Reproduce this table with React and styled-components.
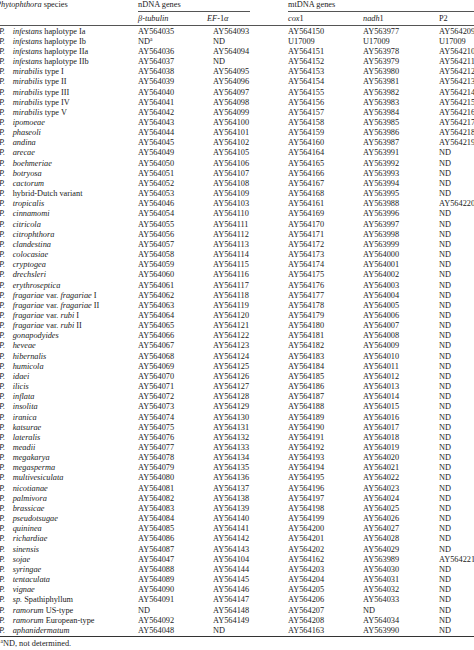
import React from "react";
import styled, { createGlobalStyle } from "styled-components";

const GlobalStyle = createGlobalStyle`
  html, body { margin: 0; padding: 0; background: #fff; overflow: hidden; }
  body { font-family: "Liberation Serif", "Times New Roman", serif; color: #222; }
`;

const COLS = "141px 75px 75px 75px 76px 1fr";

const Table = styled.div`
  width: 540px;
  margin-left: -3px;
  font-size: 8.3px;
`;

const HeadTop = styled.div`
  display: grid;
  grid-template-columns: 141px 150px 1fr;
  line-height: 10px;
`;

const HeadCell = styled.div`
  white-space: nowrap;
  margin-left: -1px;
`;

const Group = styled.div`
  width: ${(p) => p.$rule || "auto"};
  padding-bottom: 1px;
  border-bottom: 1px solid #555;
  white-space: nowrap;
`;

const HeadSub = styled.div`
  display: grid;
  grid-template-columns: ${COLS};
  line-height: 10px;
  padding-top: 2.3px;
  padding-bottom: 1px;
  border-bottom: 1px solid #555;
`;

const SubCell = styled.div`
  white-space: nowrap;
  margin-left: ${(p) => p.$shift || "0px"};
  font-style: ${(p) => (p.$italic ? "italic" : "normal")};
`;

const Body = styled.div`
  padding-top: 0.3px;
  border-bottom: 1.6px solid #333;
`;

const Row = styled.div`
  display: grid;
  grid-template-columns: ${COLS};
  line-height: 10.17px;
  height: 10.17px;
`;

const Cell = styled.div`
  white-space: nowrap;
`;

const Genus = styled.i`
  display: inline-block;
  width: 13.7px;
  padding-left: 2px;
  font-style: italic;
`;

const It = styled.i`
  font-style: italic;
`;

const Sup = styled.sup`
  font-size: 5.5px;
  line-height: 0;
  vertical-align: 3px;
`;

const Footnote = styled.div`
  padding-top: 2px;
  padding-left: 3.5px;
  line-height: 10px;
  white-space: nowrap;
`;

const rows = [
  ["*P. infestans* haplotype Ia", "AY564035", "AY564093", "AY564150", "AY563977", "AY564209"],
  ["*P. infestans* haplotype Ib", "ND^a", "ND", "U17009", "U17009", "U17009"],
  ["*P. infestans* haplotype IIa", "AY564036", "AY564094", "AY564151", "AY563978", "AY564210"],
  ["*P. infestans* haplotype IIb", "AY564037", "ND", "AY564152", "AY563979", "AY564211"],
  ["*P. mirabilis* type I", "AY564038", "AY564095", "AY564153", "AY563980", "AY564212"],
  ["*P. mirabilis* type II", "AY564039", "AY564096", "AY564154", "AY563981", "AY564213"],
  ["*P. mirabilis* type III", "AY564040", "AY564097", "AY564155", "AY563982", "AY564214"],
  ["*P. mirabilis* type IV", "AY564041", "AY564098", "AY564156", "AY563983", "AY564215"],
  ["*P. mirabilis* type V", "AY564042", "AY564099", "AY564157", "AY563984", "AY564216"],
  ["*P. ipomoeae*", "AY564043", "AY564100", "AY564158", "AY563985", "AY564217"],
  ["*P. phaseoli*", "AY564044", "AY564101", "AY564159", "AY563986", "AY564218"],
  ["*P. andina*", "AY564045", "AY564102", "AY564160", "AY563987", "AY564219"],
  ["*P. arecae*", "AY564049", "AY564105", "AY564164", "AY563991", "ND"],
  ["*P. boehmeriae*", "AY564050", "AY564106", "AY564165", "AY563992", "ND"],
  ["*P. botryosa*", "AY564051", "AY564107", "AY564166", "AY563993", "ND"],
  ["*P. cactorum*", "AY564052", "AY564108", "AY564167", "AY563994", "ND"],
  ["*P.* hybrid-Dutch variant", "AY564053", "AY564109", "AY564168", "AY563995", "ND"],
  ["*P. tropicalis*", "AY564046", "AY564103", "AY564161", "AY563988", "AY564220"],
  ["*P. cinnamomi*", "AY564054", "AY564110", "AY564169", "AY563996", "ND"],
  ["*P. citricola*", "AY564055", "AY564111", "AY564170", "AY563997", "ND"],
  ["*P. citrophthora*", "AY564056", "AY564112", "AY564171", "AY563998", "ND"],
  ["*P. clandestina*", "AY564057", "AY564113", "AY564172", "AY563999", "ND"],
  ["*P. colocasiae*", "AY564058", "AY564114", "AY564173", "AY564000", "ND"],
  ["*P. cryptogea*", "AY564059", "AY564115", "AY564174", "AY564001", "ND"],
  ["*P. drechsleri*", "AY564060", "AY564116", "AY564175", "AY564002", "ND"],
  ["*P. erythroseptica*", "AY564061", "AY564117", "AY564176", "AY564003", "ND"],
  ["*P. fragariae* var. *fragariae* I", "AY564062", "AY564118", "AY564177", "AY564004", "ND"],
  ["*P. fragariae* var. *fragariae* II", "AY564063", "AY564119", "AY564178", "AY564005", "ND"],
  ["*P. fragariae* var. *rubi* I", "AY564064", "AY564120", "AY564179", "AY564006", "ND"],
  ["*P. fragariae* var. *rubi* II", "AY564065", "AY564121", "AY564180", "AY564007", "ND"],
  ["*P. gonapodyides*", "AY564066", "AY564122", "AY564181", "AY564008", "ND"],
  ["*P. heveae*", "AY564067", "AY564123", "AY564182", "AY564009", "ND"],
  ["*P. hibernalis*", "AY564068", "AY564124", "AY564183", "AY564010", "ND"],
  ["*P. humicola*", "AY564069", "AY564125", "AY564184", "AY564011", "ND"],
  ["*P. idaei*", "AY564070", "AY564126", "AY564185", "AY564012", "ND"],
  ["*P. ilicis*", "AY564071", "AY564127", "AY564186", "AY564013", "ND"],
  ["*P. inflata*", "AY564072", "AY564128", "AY564187", "AY564014", "ND"],
  ["*P. insolita*", "AY564073", "AY564129", "AY564188", "AY564015", "ND"],
  ["*P. iranica*", "AY564074", "AY564130", "AY564189", "AY564016", "ND"],
  ["*P. katsurae*", "AY564075", "AY564131", "AY564190", "AY564017", "ND"],
  ["*P. lateralis*", "AY564076", "AY564132", "AY564191", "AY564018", "ND"],
  ["*P. meadii*", "AY564077", "AY564133", "AY564192", "AY564019", "ND"],
  ["*P. megakarya*", "AY564078", "AY564134", "AY564193", "AY564020", "ND"],
  ["*P. megasperma*", "AY564079", "AY564135", "AY564194", "AY564021", "ND"],
  ["*P. multivesiculata*", "AY564080", "AY564136", "AY564195", "AY564022", "ND"],
  ["*P. nicotianae*", "AY564081", "AY564137", "AY564196", "AY564023", "ND"],
  ["*P. palmivora*", "AY564082", "AY564138", "AY564197", "AY564024", "ND"],
  ["*P. brassicae*", "AY564083", "AY564139", "AY564198", "AY564025", "ND"],
  ["*P. pseudotsugae*", "AY564084", "AY564140", "AY564199", "AY564026", "ND"],
  ["*P. quininea*", "AY564085", "AY564141", "AY564200", "AY564027", "ND"],
  ["*P. richardiae*", "AY564086", "AY564142", "AY564201", "AY564028", "ND"],
  ["*P. sinensis*", "AY564087", "AY564143", "AY564202", "AY564029", "ND"],
  ["*P. sojae*", "AY564047", "AY564104", "AY564162", "AY563989", "AY564221"],
  ["*P. syringae*", "AY564088", "AY564144", "AY564203", "AY564030", "ND"],
  ["*P. tentaculata*", "AY564089", "AY564145", "AY564204", "AY564031", "ND"],
  ["*P. vignae*", "AY564090", "AY564146", "AY564205", "AY564032", "ND"],
  ["*P. sp.* Spathiphyllum", "AY564091", "AY564147", "AY564206", "AY564033", "ND"],
  ["*P. ramorum* US-type", "ND", "AY564148", "AY564207", "ND", "ND"],
  ["*P. ramorum* European-type", "AY564092", "AY564149", "AY564208", "AY564034", "ND"],
  ["*P. aphanidermatum*", "AY564048", "ND", "AY564163", "AY563990", "ND"],
];

function Species({ text }) {
  const rest = text.replace(/^\*P\.(\*)? ?/, (m, star) => (star ? "" : "*"));
  const parts = rest.split("*");
  return (
    <>
      <Genus>P.</Genus>
      {parts.map((p, i) =>
        i % 2 === 1 ? <It key={i}>{p}</It> : <React.Fragment key={i}>{p}</React.Fragment>
      )}
    </>
  );
}

function Value({ v }) {
  if (v.includes("^")) {
    const [base, sup] = v.split("^");
    return (
      <>
        {base}
        <Sup>{sup}</Sup>
      </>
    );
  }
  return v;
}

export default function App() {
  return (
    <>
      <GlobalStyle />
      <Table>
        <HeadTop>
          <HeadCell>
            <It>Phytophthora</It> species
          </HeadCell>
          <Group $rule="112px">nDNA genes</Group>
          <Group>mtDNA genes</Group>
        </HeadTop>
        <HeadSub>
          <SubCell />
          <SubCell $italic>β-tubulin</SubCell>
          <SubCell $shift="-6px">
            <It>EF</It>-1<It>α</It>
          </SubCell>
          <SubCell>
            <It>cox</It>1
          </SubCell>
          <SubCell>
            <It>nadh</It>1
          </SubCell>
          <SubCell>P2</SubCell>
        </HeadSub>
        <Body>
          {rows.map((r, i) => (
            <Row key={i}>
              <Cell>
                <Species text={r[0]} />
              </Cell>
              {r.slice(1).map((v, j) => (
                <Cell key={j}>
                  <Value v={v} />
                </Cell>
              ))}
            </Row>
          ))}
        </Body>
        <Footnote>
          <Sup>a</Sup>ND, not determined.
        </Footnote>
      </Table>
    </>
  );
}
